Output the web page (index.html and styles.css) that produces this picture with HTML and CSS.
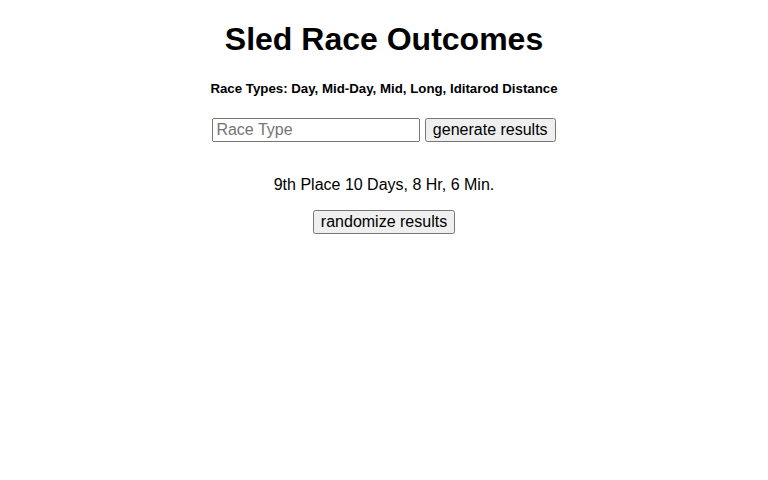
FILE: index.html
```html
<!DOCTYPE html>
<html lang="en">
<head>
    <meta charset="UTF-8">
    <meta name="viewport" content="width=device-width, initial-scale=1.0">
    <title>Sled Race Outcomes</title>
    <link rel="stylesheet" href="styles.css">
</head>
<body>
    <h1>Sled Race Outcomes</h1>
    <h5>Race Types: Day, Mid-Day, Mid, Long, Iditarod Distance</h5>

    <div class="controls">
        <input type="text" id="raceType" placeholder="Race Type">
        <button id="generateButton">generate results</button>
    </div>

    <p id="result">9th Place 10 Days, 8 Hr, 6 Min.</p>
    <button id="randomButton">randomize results</button>
</body>
</html>
```

FILE: styles.css
```css
body {
    font-family: 'Liberation Sans', Arial, sans-serif;
    text-align: center;
    color: #000;
    background: #fff;
    margin: 0 8px;
}
h1 {
    font-size: 2em;
}
h5 {
    font-size: 0.83em;
}
input, button {
    font-family: 'Liberation Sans', Arial, sans-serif;
    font-size: 16px;
}
input {
    width: 200px;
}
#result {
    margin-top: 34px;
}
```
